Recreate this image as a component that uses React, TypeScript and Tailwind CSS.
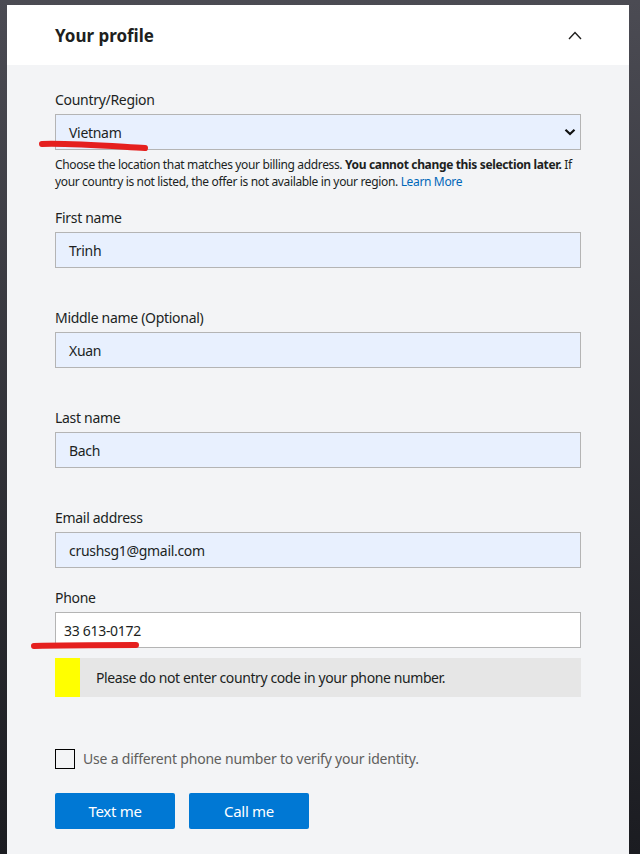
import React from "react";

const font = { fontFamily: '"Noto Sans", "Open Sans", sans-serif' };

function Field({ label, value, white }: { label: string; value: string; white?: boolean }) {
  return (
    <div>
      <label className="block text-[14px] leading-5 tracking-[-0.3px] text-[#201f1e] mb-[4px]">{label}</label>
      <div
        className={`h-9 border border-[#b4b4b4] flex items-center px-[13px] text-[14px] tracking-[-0.3px] text-[#201f1e] ${
          white ? "bg-white" : "bg-[#e8f0fe]"
        }`}
      >
        {value}
      </div>
    </div>
  );
}

function RedMark({ d }: { d: string }) {
  return (
    <svg className="absolute pointer-events-none" width="120" height="14" viewBox="0 0 120 14">
      <path d={d} stroke="#e5201f" strokeWidth="6" strokeLinecap="round" fill="none" />
    </svg>
  );
}

export default function App() {
  return (
    <div className="min-h-screen bg-gradient-to-b from-[#4b4b53] to-[#1b1c21] pt-[5px] pl-[7px] overflow-hidden" style={font}>
      <div className="w-[622px] min-h-[849px] bg-[#f3f4f6]">
        {/* header */}
        <div className="h-[60px] bg-white flex items-center justify-between pl-[48px] pr-[47px]">
          <h2 className="text-[17px] font-bold text-[#201f1e] mt-[2px]">Your profile</h2>
          <svg width="14" height="9" viewBox="0 0 14 9" fill="none">
            <path d="M1 8L7 1.5L13 8" stroke="#201f1e" strokeWidth="1.4" />
          </svg>
        </div>

        <div className="px-[48px] pt-[25px] w-[622px]">
          {/* country */}
          <div>
            <label className="block text-[14px] leading-5 tracking-[-0.3px] text-[#201f1e] mb-[4px]">Country/Region</label>
            <div className="relative h-9 border border-[#b4b4b4] bg-[#e8f0fe] flex items-center justify-between pl-[13px] pr-[4px] text-[14px] tracking-[-0.3px] text-[#201f1e]">
              <span>Vietnam</span>
              <svg width="12" height="8" viewBox="0 0 12 8" fill="none">
                <path d="M1.5 1.8L6 6L10.5 1.8" stroke="#111" strokeWidth="2.2" />
              </svg>
              <div className="absolute left-[-17px] top-[24px]">
                <RedMark d="M3 5C30 4 70 7 106 9" />
              </div>
            </div>
            <p className="mt-[6px] text-[12px] leading-[17px] tracking-[-0.35px] text-[#201f1e]">
              Choose the location that matches your billing address.{" "}
              <span className="font-bold">You cannot change this selection later.</span> If your country is not listed,
              the offer is not available in your region. <span className="text-[#0067b8]">Learn More</span>
            </p>
          </div>

          <div className="mt-[18px]">
            <Field label="First name" value="Trinh" />
          </div>
          <div className="mt-[40px]">
            <Field label="Middle name (Optional)" value="Xuan" />
          </div>
          <div className="mt-[40px]">
            <Field label="Last name" value="Bach" />
          </div>
          <div className="mt-[40px]">
            <Field label="Email address" value="crushsg1@gmail.com" />
          </div>

          {/* phone */}
          <div className="mt-[20px]">
            <label className="block text-[14px] leading-5 tracking-[-0.3px] text-[#201f1e] mb-[4px]">Phone</label>
            <div className="relative h-9 border border-[#b4b4b4] bg-white flex items-center px-[8px] text-[14px] tracking-[-0.3px] text-[#201f1e]">
              33 613-0172
              <div className="absolute left-[-25px] top-[26px]">
                <RedMark d="M3 7C35 6 70 6 105 6" />
              </div>
            </div>
          </div>

          <div className="mt-[10px] h-[39px] bg-[#e6e6e6] flex items-center">
            <div className="w-[25px] h-full bg-[#ffff00]" />
            <span className="ml-[16px] text-[14px] tracking-[-0.4px] text-[#201f1e]">
              Please do not enter country code in your phone number.
            </span>
          </div>

          <div className="mt-[51px] flex items-center">
            <div className="w-5 h-5 border border-black bg-transparent" />
            <span className="ml-[8px] text-[14px] tracking-[-0.2px] text-[#605e5c]">
              Use a different phone number to verify your identity.
            </span>
          </div>

          <div className="mt-[24px] flex gap-[14px]">
            <button className="w-[120px] h-9 bg-[#0078d4] text-white text-[15px] tracking-[-0.3px] rounded-[2px]">Text me</button>
            <button className="w-[120px] h-9 bg-[#0078d4] text-white text-[15px] tracking-[-0.3px] rounded-[2px]">Call me</button>
          </div>
        </div>
      </div>
    </div>
  );
}
